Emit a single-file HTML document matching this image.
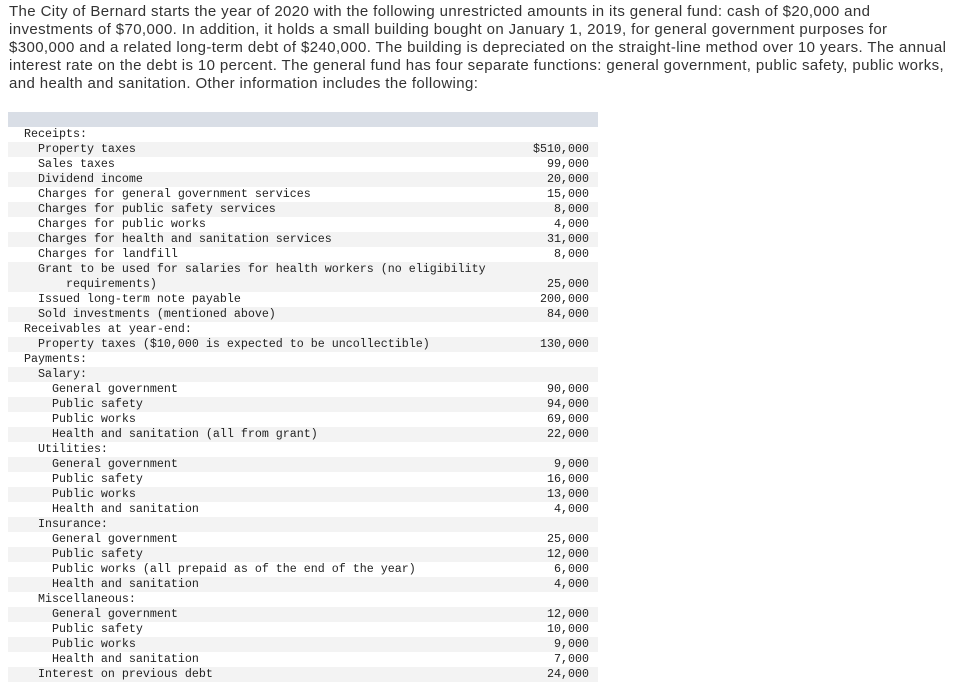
<!DOCTYPE html>
<html><head><style>
body{margin:0;background:#fff;width:978px;height:683px;overflow:hidden}
.p{position:absolute;left:9px;top:3px;font-family:"Liberation Sans",sans-serif;font-size:15px;letter-spacing:0.39px;line-height:18px;color:#333;white-space:nowrap}
.t{position:absolute;left:8px;top:112px;width:590px}
.h{height:15px;background:#d9dee6}
.r{position:relative;height:15px;padding-left:2px;font-family:"Liberation Mono",monospace;font-size:11.67px;line-height:15px;color:#222;white-space:pre}
.r.g{background:#f3f3f3}
.r.d{height:30px}
.n{position:absolute;right:9px;bottom:0}
</style></head><body>
<div class="p">The City of Bernard starts the year of 2020 with the following unrestricted amounts in its general fund: cash of $20,000 and<br>investments of $70,000. In addition, it holds a small building bought on January 1, 2019, for general government purposes for<br>$300,000 and a related long-term debt of $240,000. The building is depreciated on the straight-line method over 10 years. The annual<br>interest rate on the debt is 10 percent. The general fund has four separate functions: general government, public safety, public works,<br>and health and sanitation. Other information includes the following:</div>
<div class="t">
<div class="h"></div>
<div class="r">  Receipts:</div>
<div class="r g">    Property taxes<span class="n">$510,000</span></div>
<div class="r">    Sales taxes<span class="n">99,000</span></div>
<div class="r g">    Dividend income<span class="n">20,000</span></div>
<div class="r">    Charges for general government services<span class="n">15,000</span></div>
<div class="r g">    Charges for public safety services<span class="n">8,000</span></div>
<div class="r">    Charges for public works<span class="n">4,000</span></div>
<div class="r g">    Charges for health and sanitation services<span class="n">31,000</span></div>
<div class="r">    Charges for landfill<span class="n">8,000</span></div>
<div class="r g d">    Grant to be used for salaries for health workers (no eligibility
        requirements)<span class="n">25,000</span></div>
<div class="r">    Issued long-term note payable<span class="n">200,000</span></div>
<div class="r g">    Sold investments (mentioned above)<span class="n">84,000</span></div>
<div class="r">  Receivables at year-end:</div>
<div class="r g">    Property taxes ($10,000 is expected to be uncollectible)<span class="n">130,000</span></div>
<div class="r">  Payments:</div>
<div class="r g">    Salary:</div>
<div class="r">      General government<span class="n">90,000</span></div>
<div class="r g">      Public safety<span class="n">94,000</span></div>
<div class="r">      Public works<span class="n">69,000</span></div>
<div class="r g">      Health and sanitation (all from grant)<span class="n">22,000</span></div>
<div class="r">    Utilities:</div>
<div class="r g">      General government<span class="n">9,000</span></div>
<div class="r">      Public safety<span class="n">16,000</span></div>
<div class="r g">      Public works<span class="n">13,000</span></div>
<div class="r">      Health and sanitation<span class="n">4,000</span></div>
<div class="r g">    Insurance:</div>
<div class="r">      General government<span class="n">25,000</span></div>
<div class="r g">      Public safety<span class="n">12,000</span></div>
<div class="r">      Public works (all prepaid as of the end of the year)<span class="n">6,000</span></div>
<div class="r g">      Health and sanitation<span class="n">4,000</span></div>
<div class="r">    Miscellaneous:</div>
<div class="r g">      General government<span class="n">12,000</span></div>
<div class="r">      Public safety<span class="n">10,000</span></div>
<div class="r g">      Public works<span class="n">9,000</span></div>
<div class="r">      Health and sanitation<span class="n">7,000</span></div>
<div class="r g">    Interest on previous debt<span class="n">24,000</span></div>
</div>
</body></html>
